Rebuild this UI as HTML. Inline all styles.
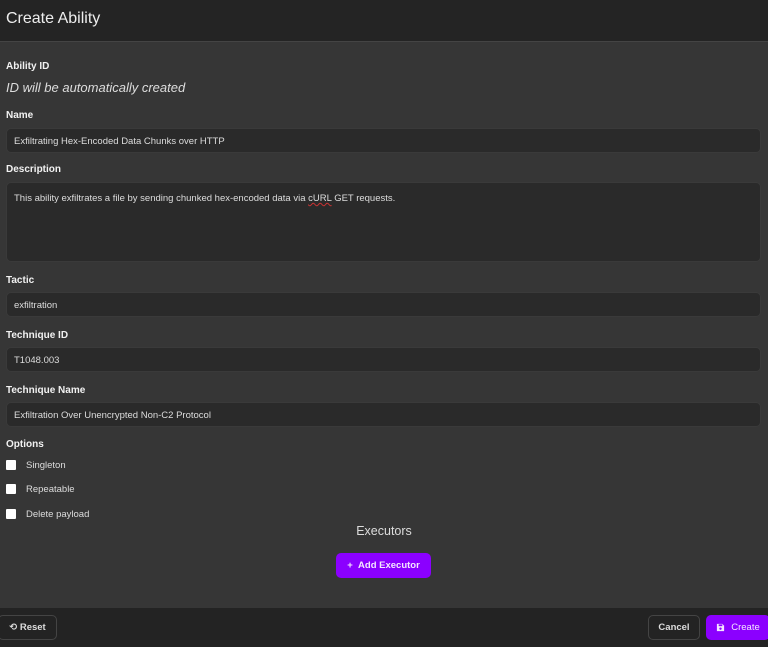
<!DOCTYPE html>
<html><head><style>
*{box-sizing:border-box;margin:0;padding:0}
body{width:768px;height:647px;background:#363636;font-family:"Liberation Sans","DejaVu Sans",sans-serif;color:#eee;position:relative;overflow:hidden}
.hdr{position:absolute;left:0;top:0;width:768px;height:42px;background:#242424;border-bottom:1px solid #444}
.hdr span{position:absolute;left:6px;top:10px;font-size:16px;color:#eee}
.lbl{position:absolute;left:6px;font-size:10px;font-weight:bold;color:#f2f2f2}
.inp{position:absolute;left:6px;width:755px;height:25px;background:#2a2a2a;border:1px solid #3a3a3a;border-radius:5px;font-size:9.5px;padding:7px 0 0 7px;color:#ddd}
.cb{position:absolute;left:6px;width:10px;height:10px;background:#fff;border-radius:1px}
.cbl{position:absolute;left:26px;font-size:9.5px;color:#ddd}
.ftr{position:absolute;left:0;top:608px;width:768px;height:39px;background:#232323}
.btn{position:absolute;height:25px;border-radius:5px;font-size:9.5px;font-weight:bold;display:flex;align-items:center;justify-content:center}
</style></head><body>
<div class="hdr"><span>Create Ability</span></div>
<div class="lbl" style="top:61px">Ability ID</div>
<div style="position:absolute;left:6px;top:80px;font-size:13px;font-style:italic;color:#ddd">ID will be automatically created</div>
<div class="lbl" style="top:110px">Name</div>
<div class="inp" style="top:128px">Exfiltrating Hex-Encoded Data Chunks over HTTP</div>
<div class="lbl" style="top:164px">Description</div>
<div class="inp" style="top:182px;height:80px;padding-top:10px">This ability exfiltrates a file by sending chunked hex-encoded data via <span style="text-decoration:underline wavy #c33">cURL</span> GET requests.</div>
<div class="lbl" style="top:275px">Tactic</div>
<div class="inp" style="top:292px">exfiltration</div>
<div class="lbl" style="top:330px">Technique ID</div>
<div class="inp" style="top:347px">T1048.003</div>
<div class="lbl" style="top:385px">Technique Name</div>
<div class="inp" style="top:402px">Exfiltration Over Unencrypted Non-C2 Protocol</div>
<div class="lbl" style="top:439px">Options</div>
<div class="cb" style="top:460px"></div><div class="cbl" style="top:460px">Singleton</div>
<div class="cb" style="top:484px"></div><div class="cbl" style="top:484px">Repeatable</div>
<div class="cb" style="top:509px"></div><div class="cbl" style="top:509px">Delete payload</div>
<div style="position:absolute;left:0;width:768px;top:524px;text-align:center;font-size:12.5px;color:#ddd">Executors</div>
<div class="btn" style="left:336px;top:553px;width:95px;background:#8b00ff;color:#f4e6ff">+&nbsp;&nbsp;Add Executor</div>
<div class="ftr"></div>
<div class="btn" style="left:-2px;top:615px;width:59px;border:1px solid #444;color:#ddd">⟲&nbsp;Reset</div>
<div class="btn" style="left:648px;top:615px;width:52px;border:1px solid #444;color:#ddd">Cancel</div>
<div class="btn" style="left:706px;top:615px;width:64px;background:#8b00ff;color:#f4e6ff;font-weight:normal">
<svg width="9" height="9" viewBox="0 0 10 10" style="margin-right:6px"><path d="M1 1h6l2 2v6H1z" fill="#f4e6ff"/><rect x="3" y="1.5" width="4" height="2" fill="#8b00ff"/><circle cx="5" cy="6.3" r="1.3" fill="#8b00ff"/></svg>Create</div>
</body></html>
